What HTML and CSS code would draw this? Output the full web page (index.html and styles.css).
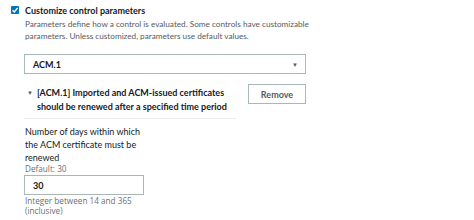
FILE: index.html
```html
<!DOCTYPE html>
<html>
<head>
    <meta charset="UTF-8">
    <title>Control parameters</title>
    <link rel="stylesheet" href="styles.css">
</head>
<body>
    <div class="customize">
        <div class="checkRow">
            <span class="checkbox">
                <svg width="8" height="8" viewBox="0 0 8 8"><path d="M1.5 4.2 L3.3 5.9 L6.6 2" fill="none" stroke="white" stroke-width="1.4"/></svg>
            </span>
            <span class="checkLabel">Customize control parameters</span>
        </div>
        <p class="description">Parameters define how a control is evaluated. Some controls have customizable parameters. Unless customized, parameters use default values.</p>
    </div>
    <div class="content">
        <div class="select">
            <span>ACM.1</span>
            <span class="caret">&#9660;</span>
        </div>
        <div class="controlRow">
            <div class="controlTitle">
                <span class="arrow">&#9660;</span>
                <span>[ACM.1] Imported and ACM-issued certificates should be renewed after a specified time period</span>
            </div>
            <button class="remove">Remove</button>
        </div>
        <div class="divider"></div>
        <div class="field">
            <label class="fieldLabel">Number of days within which the ACM certificate must be renewed</label>
            <div class="hint">Default: 30</div>
            <div class="input">30</div>
            <div class="hint constraint">Integer between 14 and 365 (inclusive)</div>
        </div>
    </div>
</body>
</html>
```

FILE: styles.css
```css
body {
    margin: 0;
    font-family: Lato, "Open Sans", sans-serif;
    font-size: 9px;
    color: #16191f;
    background: white;
}
.customize {
    padding: 5px 0 0 11px;
}
.checkRow {
    display: flex;
    align-items: center;
    gap: 6px;
    height: 10px;
}
.checkbox {
    width: 8px;
    height: 8px;
    background-color: #0073bb;
    border-radius: 1px;
    display: flex;
}
.checkLabel {
    font-weight: 700;
}
.description {
    margin: 3px 0 0 14px;
    width: 310px;
    font-size: 8.2px;
    line-height: 12px;
    color: #545b64;
}
.content {
    padding: 12px 0 0 24px;
    width: 282px;
}
.select {
    border: 1px solid #aab7b8;
    height: 18px;
    padding: 0 7px 0 8px;
    display: flex;
    align-items: center;
    justify-content: space-between;
    font-weight: 700;
}
.caret {
    font-size: 6px;
    color: #545b64;
}
.controlRow {
    display: flex;
    justify-content: space-between;
    padding: 10px 0 0 3px;
}
.controlTitle {
    display: flex;
    gap: 4px;
    width: 208px;
    padding-top: 2px;
    font-weight: 700;
    line-height: 14px;
}
.arrow {
    font-size: 6px;
    color: #545b64;
}
.remove {
    width: 58px;
    height: 20px;
    border: 1px solid #aab7b8;
    background: white;
    color: #545b64;
    font-family: inherit;
    font-size: 9px;
    font-weight: 700;
}
.divider {
    width: 212px;
    height: 1px;
    background-color: #eaeded;
    margin-top: 4px;
}
.field {
    padding: 6px 0 0 1px;
}
.fieldLabel {
    display: block;
    width: 118px;
    line-height: 13px;
}
.hint {
    font-family: "Open Sans", sans-serif;
    font-size: 8.2px;
    color: #687078;
    line-height: 10px;
}
.input {
    width: 102px;
    height: 18px;
    border: 1px solid #aab7b8;
    margin: 1px 0 0 -1px;
    padding: 0 8px;
    display: flex;
    align-items: center;
    font-weight: 700;
}
.constraint {
    margin-top: 1px;
    width: 112px;
}
```
